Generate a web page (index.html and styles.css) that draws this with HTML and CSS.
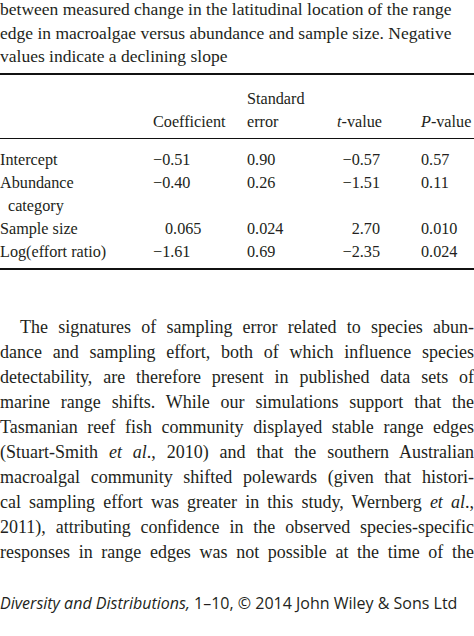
FILE: index.html
```html
<!DOCTYPE html>
<html lang="en">
<head>
  <meta charset="UTF-8">
  <title>Diversity and Distributions</title>
  <link rel="stylesheet" href="styles.css">
</head>
<body>

  <div class="page">
    <p class="caption">
      <span class="line">between measured change in the latitudinal location of the range</span>
      <span class="line">edge in macroalgae versus abundance and sample size. Negative</span>
      <span class="line">values indicate a declining slope</span>
    </p>

    <table class="stats">
      <thead>
        <tr>
          <th class="label"></th>
          <th class="coef">Coefficient</th>
          <th class="se">Standard<br>error</th>
          <th class="tval"><i>t</i>-value</th>
          <th class="pval"><i>P</i>-value</th>
        </tr>
      </thead>
      <tbody>
        <tr>
          <td class="label">Intercept</td>
          <td class="coef">&minus;0.51</td>
          <td class="se">0.90</td>
          <td class="tval">&minus;0.57</td>
          <td class="pval">0.57</td>
        </tr>
        <tr>
          <td class="label">Abundance<br><span class="wrap">category</span></td>
          <td class="coef">&minus;0.40</td>
          <td class="se">0.26</td>
          <td class="tval">&minus;1.51</td>
          <td class="pval">0.11</td>
        </tr>
        <tr>
          <td class="label">Sample size</td>
          <td class="coef pos">0.065</td>
          <td class="se">0.024</td>
          <td class="tval">2.70</td>
          <td class="pval">0.010</td>
        </tr>
        <tr>
          <td class="label">Log(effort ratio)</td>
          <td class="coef">&minus;1.61</td>
          <td class="se">0.69</td>
          <td class="tval">&minus;2.35</td>
          <td class="pval">0.024</td>
        </tr>
      </tbody>
    </table>

    <p class="text">
      <span class="line first">The signatures of sampling error related to species abun-</span>
      <span class="line">dance and sampling effort, both of which influence species</span>
      <span class="line">detectability, are therefore present in published data sets of</span>
      <span class="line">marine range shifts. While our simulations support that the</span>
      <span class="line">Tasmanian reef fish community displayed stable range edges</span>
      <span class="line">(Stuart-Smith <i>et al</i>., 2010) and that the southern Australian</span>
      <span class="line">macroalgal community shifted polewards (given that histori-</span>
      <span class="line">cal sampling effort was greater in this study, Wernberg <i>et al</i>.,</span>
      <span class="line">2011), attributing confidence in the observed species-specific</span>
      <span class="line">responses in range edges was not possible at the time of the</span>
    </p>

    <div class="footer"><i>Diversity and Distributions,</i> 1&ndash;10, &copy; 2014 John Wiley &amp; Sons Ltd</div>
  </div>

</body>
</html>
```

FILE: styles.css
```css
body {
  margin: 0;
  background-color: #fff;
  color: #231f20;
  font-family: "Liberation Serif", serif;
  overflow: hidden;
}

.page {
  width: 474px;
}

.line {
  display: block;
  white-space: nowrap;
}

.caption {
  margin: -2px 0 0 0;
  font-size: 17.5px;
  line-height: 23.5px;
}

.stats {
  width: 474px;
  margin-top: 4px;
  table-layout: fixed;
  border-collapse: collapse;
  border-top: 2px solid #111;
  border-bottom: 2px solid #111;
  font-size: 16.2px;
  line-height: 23px;
}

.stats th {
  font-weight: normal;
  text-align: left;
  vertical-align: bottom;
  white-space: nowrap;
  padding: 13px 0 4px 0;
  border-bottom: 1px solid #111;
}

.stats td {
  vertical-align: top;
  white-space: nowrap;
  padding: 0;
}

.stats tbody tr:first-child td {
  padding-top: 10px;
}

.stats tbody tr:last-child td {
  padding-bottom: 4px;
}

.label {
  width: 153px;
}

.wrap {
  padding-left: 8px;
}

.coef {
  width: 94px;
}

.stats td.pos {
  padding-left: 12px;
}

.se {
  width: 90px;
}

.tval {
  width: 84px;
}

.stats td.tval {
  text-align: right;
  padding-right: 41px;
}

.text {
  margin: 45px 0 0 0;
  font-size: 18px;
  line-height: 25px;
}

.text .line {
  text-align: justify;
  text-align-last: justify;
}

.text .first {
  text-indent: 20px;
}

.footer {
  margin-top: 27px;
  font-family: "Open Sans", sans-serif;
  font-size: 16px;
  white-space: nowrap;
}
```
